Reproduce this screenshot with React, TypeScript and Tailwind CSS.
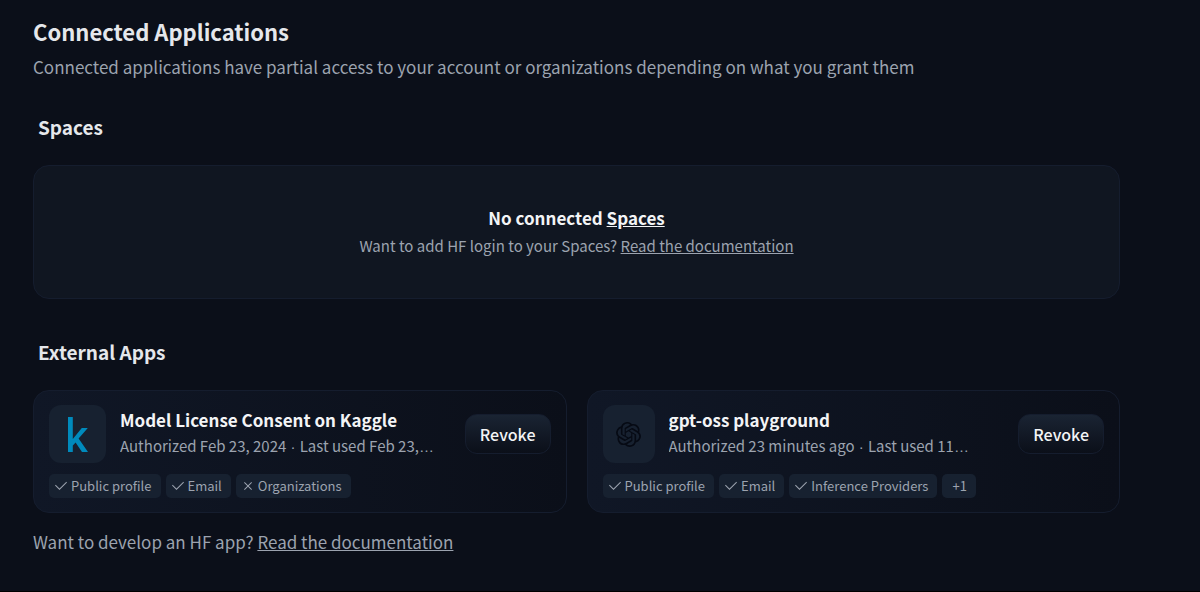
import type { ReactNode } from "react";
import { SiOpenai } from "react-icons/si";

/* ───────── Icons ───────── */
const KaggleLogo = () => (
    <svg viewBox="0 0 20 35" className="h-[35px] w-5 shrink-0 fill-[#008abc]" aria-hidden="true">
        <path d="M0 0h4.8v22L13.8 11h6L10.6 21.4 20 35h-6L7.6 25.4 4.8 28.4V35H0z" />
    </svg>
);

const CheckIcon = () => (
    <svg viewBox="0 0 32 32" className="size-4 shrink-0" fill="currentColor" aria-hidden="true">
        <path d="M13 24l-9-9 1.414-1.414L13 21.171 26.586 7.586 28 9 13 24z" />
    </svg>
);

const CloseIcon = () => (
    <svg viewBox="0 0 32 32" className="size-4 shrink-0" fill="currentColor" aria-hidden="true">
        <path d="M24 9.4L22.6 8 16 14.6 9.4 8 8 9.4l6.6 6.6L8 22.6 9.4 24l6.6-6.6 6.6 6.6 1.4-1.4-6.6-6.6L24 9.4z" />
    </svg>
);

/* ───────── App Data ───────── */
interface Scope {
    label: string;
    granted: boolean;
}

interface ExternalApp {
    name: string;
    authorized: string;
    lastUsed: string;
    logo: ReactNode;
    logoWidth: string;
    scopes: Scope[];
    more?: number;
}

const externalApps: ExternalApp[] = [
    {
        name: "Model License Consent on Kaggle",
        authorized: "Feb 23, 2024",
        lastUsed: "Feb 23,",
        logo: <KaggleLogo />,
        logoWidth: "w-[57px]",
        scopes: [
            { label: "Public profile", granted: true },
            { label: "Email", granted: true },
            { label: "Organizations", granted: false },
        ],
    },
    {
        name: "gpt-oss playground",
        authorized: "23 minutes ago",
        lastUsed: "11",
        logo: <SiOpenai className="size-[25px] text-[#060a14]" />,
        logoWidth: "w-[52px]",
        scopes: [
            { label: "Public profile", granted: true },
            { label: "Email", granted: true },
            { label: "Inference Providers", granted: true },
        ],
        more: 1,
    },
];

/* ───────── Scope Chip ───────── */
const Chip = ({ children }: { children: ReactNode }) => (
    <li className="flex h-6 items-center gap-0.5 rounded-[5px] bg-[#172130] pr-[9px] pl-1 text-[13px] leading-6 whitespace-nowrap text-[#9ca3af]">
        {children}
    </li>
);

/* ───────── External App Card ───────── */
const AppCard = ({ app }: { app: ExternalApp }) => (
    <article className="min-w-0 rounded-2xl border border-[#151d2e] bg-linear-to-r from-[#101726] to-[#0b0f19] px-[15px] py-3.5">
        <div className="flex items-center">
            <div className={`flex h-[58px] shrink-0 items-center justify-center rounded-xl bg-[#172130] ${app.logoWidth}`}>
                {app.logo}
            </div>
            <div className="mx-3.5 min-w-0 flex-1 pb-1">
                <h3 className="truncate text-[17px] leading-7 font-bold text-gray-100">{app.name}</h3>
                {/* separator and ellipsis use a Latin font, the CJK ones are full width */}
                <p className="truncate font-['Liberation_Sans',sans-serif] text-[15px] leading-6 text-[#9ca3af]">
                    <span className="font-['Noto_Sans_CJK_SC',sans-serif]">Authorized {app.authorized}</span>
                    {" · "}
                    <span className="font-['Noto_Sans_CJK_SC',sans-serif]">Last used {app.lastUsed}</span>…
                </p>
            </div>
            <button
                type="button"
                className="h-10 shrink-0 cursor-pointer rounded-xl border border-[#151d2e] bg-linear-to-b from-[#1a2433] to-[#0b0f19] px-3.5 text-base font-medium text-gray-100"
            >
                Revoke
            </button>
        </div>
        <ul className="mt-[11px] flex flex-wrap gap-[5px]">
            {app.scopes.map((scope) => (
                <Chip key={scope.label}>
                    {scope.granted ? <CheckIcon /> : <CloseIcon />}
                    {scope.label}
                </Chip>
            ))}
            {app.more && (
                <Chip>
                    <span className="pl-1.5">+{app.more}</span>
                </Chip>
            )}
        </ul>
    </article>
);

/* ───────── Main Export ───────── */
export default function App() {
    return (
        <main className="min-h-screen border-b border-black bg-[#0b0f19] pt-[15px] pr-20 pb-5 pl-[33px] font-['Noto_Sans_CJK_SC','Open_Sans',sans-serif] text-[#9ca3af]">
            <h1 className="text-[22px] leading-8 font-bold text-gray-200">Connected Applications</h1>
            <p className="mt-1.5 text-[17px] leading-7">
                Connected applications have partial access to your account or organizations depending on what you grant them
            </p>

            <section className="mt-8">
                <h2 className="ml-[5px] text-[19px] leading-7 font-bold text-gray-200">Spaces</h2>
                <div className="mt-6 rounded-2xl border border-[#151d2e] bg-[#101621] px-4 py-[38px] text-center">
                    <p className="text-[17px] leading-7 font-bold text-gray-100">
                        No connected{" "}
                        <a href="#spaces" className="underline">
                            Spaces
                        </a>
                    </p>
                    <p className="text-[15px] leading-7">
                        Want to add HF login to your Spaces?{" "}
                        <a href="#spaces-docs" className="underline">
                            Read the documentation
                        </a>
                    </p>
                </div>
            </section>

            <section className="mt-[39px]">
                <h2 className="ml-[5px] text-[19px] leading-7 font-bold text-gray-200">External Apps</h2>
                <div className="mt-6 grid grid-cols-2 gap-5">
                    {externalApps.map((app) => (
                        <AppCard key={app.name} app={app} />
                    ))}
                </div>
                <p className="mt-[15px] text-[17px] leading-7">
                    Want to develop an HF app?{" "}
                    <a href="#apps-docs" className="underline">
                        Read the documentation
                    </a>
                </p>
            </section>
        </main>
    );
}
